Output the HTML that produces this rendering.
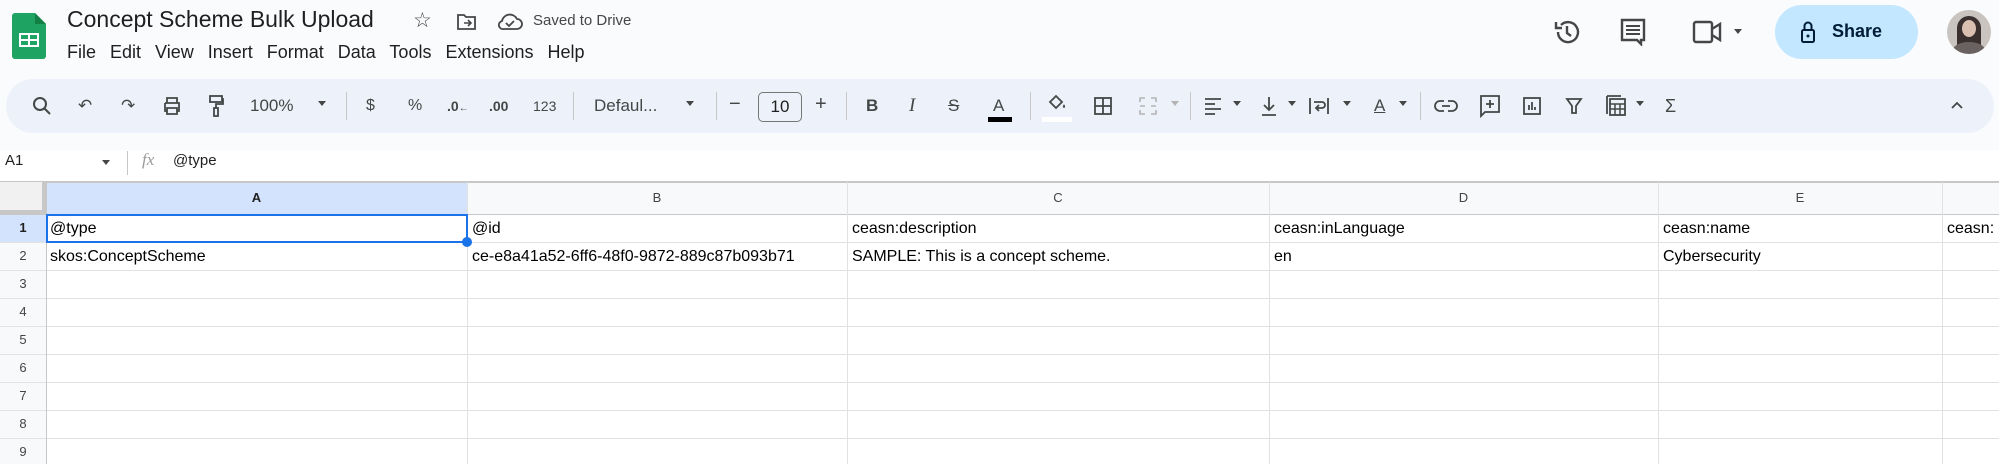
<!DOCTYPE html>
<html><head><meta charset="utf-8"><style>
*{margin:0;padding:0;box-sizing:border-box}
body{width:1999px;height:464px;overflow:hidden;background:#fff;font-family:"Liberation Sans",Arial,sans-serif;color:#1f1f1f;position:relative}
.a{position:absolute}
.top{left:0;top:0;width:1999px;height:150px;background:#f9fbfd}
.pill{left:6px;top:79px;width:1988px;height:54px;background:#edf2fa;border-radius:27px}
.ti{position:absolute;top:96px;font-size:17px;color:#444746;line-height:20px}
.sep{position:absolute;top:92px;width:1px;height:28px;background:#c7c7c7}
.car{position:absolute;top:101px;width:0;height:0;border-left:4px solid transparent;border-right:4px solid transparent;border-top:5px solid #444746}
.hl{position:absolute;left:0;width:1999px;height:1px;background:#e2e2e2}
.vl{position:absolute;top:182px;width:1px;height:282px;background:#e2e2e2}
.ch{position:absolute;top:182px;height:32px;font-size:13px;color:#444;text-align:center;line-height:32px}
.rn{position:absolute;left:0;width:46px;font-size:13px;color:#444;text-align:center;line-height:28px}
.c{position:absolute;font-size:16px;color:#000;line-height:28px;white-space:nowrap}
svg{position:absolute}
</style></head><body>
<div class="a top"></div>
<svg style="left:12px;top:13px" width="34" height="46" viewBox="0 0 34 46"><path d="M3 0H23L34 11V43a3 3 0 0 1-3 3H3a3 3 0 0 1-3-3V3a3 3 0 0 1 3-3z" fill="#1ea362"/><path d="M23 0V11H34z" fill="#138046"/><rect x="7" y="20" width="20" height="14" fill="#fff"/><rect x="9" y="22" width="7" height="4" fill="#1ea362"/><rect x="18" y="22" width="7" height="4" fill="#1ea362"/><rect x="9" y="28" width="7" height="4" fill="#1ea362"/><rect x="18" y="28" width="7" height="4" fill="#1ea362"/></svg>
<div class="a" style="left:67px;top:6px;font-size:23px;color:#1f1f1f">Concept Scheme Bulk Upload</div>
<div class="a" style="left:413px;top:8px;font-size:21px;color:#444746">☆</div>
<svg style="left:457px;top:13px" width="20" height="18" viewBox="0 0 20 18"><path d="M1 2h6l2 2h9v12H1z" fill="none" stroke="#444746" stroke-width="1.8"/><path d="M7 10h7M11 7l3 3-3 3" fill="none" stroke="#444746" stroke-width="1.6"/></svg>
<svg style="left:497px;top:11px" width="26" height="20" viewBox="0 0 26 20"><path d="M7 18h13a5 5 0 0 0 0-10 8 8 0 0 0-15 2 4 4 0 0 0 2 8z" fill="none" stroke="#444746" stroke-width="1.8"/><path d="M9 12l3 3 5-5" fill="none" stroke="#444746" stroke-width="1.8"/></svg>
<div class="a" style="left:533px;top:12px;font-size:15px;color:#444746">Saved to Drive</div>
<div class="a" style="left:67px;top:42px;font-size:18px;word-spacing:9px;color:#1f1f1f">File Edit View Insert Format Data Tools Extensions Help</div>
<svg style="left:1553px;top:18px" width="28" height="28" viewBox="0 0 28 28"><path d="M5 14a10 10 0 1 0 3-7" fill="none" stroke="#444746" stroke-width="2.4"/><path d="M3 4v6h6" fill="none" stroke="#444746" stroke-width="2.4"/><path d="M14 8v7l4 3" fill="none" stroke="#444746" stroke-width="2.4"/></svg>
<svg style="left:1620px;top:18px" width="26" height="28" viewBox="0 0 26 28"><path d="M2 2h22v20h-3v4l-4-4H2z" fill="none" stroke="#444746" stroke-width="2.4"/><path d="M6 8h14M6 12h14M6 16h14" stroke="#444746" stroke-width="2"/></svg>
<svg style="left:1692px;top:19px" width="32" height="26" viewBox="0 0 32 26"><rect x="2" y="3" width="18" height="20" rx="2" fill="none" stroke="#444746" stroke-width="2.4"/><path d="M20 10l8-5v16l-8-5" fill="none" stroke="#444746" stroke-width="2.4"/></svg>
<div class="car" style="left:1734px;top:29px"></div>
<div class="a" style="left:1775px;top:5px;width:143px;height:54px;border-radius:27px;background:#c2e7ff"></div>
<svg style="left:1800px;top:20px" width="16" height="24" viewBox="0 0 16 24"><rect x="2" y="10" width="12" height="12" rx="1.5" fill="none" stroke="#001d35" stroke-width="2"/><path d="M4.5 10V6a3.5 3.5 0 0 1 7 0v4" fill="none" stroke="#001d35" stroke-width="2"/><circle cx="8" cy="16" r="1.5" fill="#001d35"/></svg>
<div class="a" style="left:1832px;top:21px;font-size:18px;color:#001d35;font-weight:bold">Share</div>
<div class="a" style="left:1947px;top:10px;width:44px;height:44px;border-radius:50%;background:#c9c4c0;overflow:hidden"><div class="a" style="left:10px;top:6px;width:24px;height:36px;border-radius:12px 12px 4px 4px;background:#3a3030"></div><div class="a" style="left:15px;top:10px;width:14px;height:17px;border-radius:50%;background:#d9c0b0"></div><div class="a" style="left:6px;top:32px;width:32px;height:16px;border-radius:50% 50% 0 0;background:#6a6260"></div></div>
<div class="a pill"></div>
<svg style="left:32px;top:96px" width="20" height="20" viewBox="0 0 20 20"><circle cx="8" cy="8" r="6" fill="none" stroke="#444746" stroke-width="2"/><path d="M12.5 12.5L18 18" stroke="#444746" stroke-width="2"/></svg>
<div class="ti" style="left:78px">↶</div><div class="ti" style="left:121px">↷</div>
<svg style="left:162px;top:96px" width="20" height="20" viewBox="0 0 20 20"><path d="M5 7V2h10v5M3 7h14v8h-2M5 15H3V7M5 12h10v6H5z" fill="none" stroke="#444746" stroke-width="1.8"/></svg>
<svg style="left:208px;top:94px" width="16" height="24" viewBox="0 0 16 24"><rect x="2" y="2" width="12" height="6" fill="none" stroke="#444746" stroke-width="1.8"/><path d="M14 5h1v5H8v4" fill="none" stroke="#444746" stroke-width="1.8"/><rect x="6" y="14" width="4" height="8" fill="none" stroke="#444746" stroke-width="1.8"/></svg>
<div class="ti" style="left:250px">100%</div><div class="car" style="left:318px"></div>
<div class="sep" style="left:346px"></div>
<div class="ti" style="left:366px;font-size:16px">$</div><div class="ti" style="left:408px;font-size:16px">%</div>
<div class="ti" style="left:447px;font-size:14px;font-weight:bold">.0<span style="font-size:10px">←</span></div>
<div class="ti" style="left:489px;font-size:14px;font-weight:bold">.00</div>
<div class="ti" style="left:533px;font-size:14px">123</div>
<div class="sep" style="left:573px"></div>
<div class="ti" style="left:594px">Defaul...</div><div class="car" style="left:686px"></div>
<div class="sep" style="left:716px"></div>
<div class="ti" style="left:729px;font-size:20px;top:94px">−</div>
<div class="a" style="left:758px;top:92px;width:44px;height:30px;border:1px solid #747775;border-radius:5px;font-size:17px;text-align:center;line-height:28px;color:#1f1f1f">10</div>
<div class="ti" style="left:815px;font-size:20px;top:94px">+</div>
<div class="sep" style="left:846px"></div>
<div class="ti" style="left:866px;font-weight:bold">B</div>
<div class="ti" style="left:909px;font-style:italic;font-family:'Liberation Serif',serif;font-size:19px">I</div>
<div class="ti" style="left:948px;text-decoration:line-through">S</div>
<div class="ti" style="left:993px">A</div><div class="a" style="left:988px;top:117px;width:24px;height:5px;background:#000"></div>
<div class="sep" style="left:1030px"></div>
<svg style="left:1046px;top:92px" width="22" height="24" viewBox="0 0 22 24"><path d="M4 10l6-6 6 6-6 6z" fill="none" stroke="#444746" stroke-width="1.8"/><path d="M18 12c-1 2-2 3 0 4 2-1 1-2 0-4z" fill="#444746"/></svg>
<div class="a" style="left:1042px;top:117px;width:30px;height:5px;background:#fff"></div>
<svg style="left:1093px;top:96px" width="20" height="20" viewBox="0 0 20 20"><rect x="2" y="2" width="16" height="16" fill="none" stroke="#444746" stroke-width="1.8"/><path d="M10 2v16M2 10h16" stroke="#444746" stroke-width="1.8"/></svg>
<svg style="left:1138px;top:96px" width="20" height="20" viewBox="0 0 20 20"><path d="M2 6V2h5M13 2h5v4M2 14v4h5M13 18h5v-4M2 10h5M13 10h5" fill="none" stroke="#b4b4b4" stroke-width="1.6"/></svg>
<div class="car" style="left:1171px;border-top-color:#b4b4b4"></div>
<div class="sep" style="left:1190px"></div>
<svg style="left:1203px;top:96px" width="20" height="20" viewBox="0 0 20 20"><path d="M2 3h16M2 8h10M2 13h16M2 18h10" stroke="#444746" stroke-width="1.8"/></svg><div class="car" style="left:1233px"></div>
<svg style="left:1260px;top:95px" width="18" height="22" viewBox="0 0 18 22"><path d="M9 2v13M4 10l5 5 5-5M2 20h14" fill="none" stroke="#444746" stroke-width="1.8"/></svg><div class="car" style="left:1288px"></div>
<svg style="left:1308px;top:96px" width="22" height="20" viewBox="0 0 22 20"><path d="M2 2v16M20 2v16M6 6h8a3 3 0 0 1 0 6H9M11 9l-3 3 3 3" fill="none" stroke="#444746" stroke-width="1.8"/></svg><div class="car" style="left:1343px"></div>
<div class="ti" style="left:1374px;text-decoration:underline">A</div><div class="car" style="left:1399px"></div>
<div class="sep" style="left:1420px"></div>
<svg style="left:1434px;top:99px" width="24" height="14" viewBox="0 0 24 14"><path d="M10 2H6a5 5 0 0 0 0 10h4M14 2h4a5 5 0 0 1 0 10h-4M8 7h8" fill="none" stroke="#444746" stroke-width="1.8"/></svg>
<svg style="left:1479px;top:94px" width="22" height="24" viewBox="0 0 22 24"><path d="M2 2h18v16H6l-4 4z" fill="none" stroke="#444746" stroke-width="1.8"/><path d="M11 6v8M7 10h8" stroke="#444746" stroke-width="1.8"/></svg>
<svg style="left:1522px;top:96px" width="20" height="20" viewBox="0 0 20 20"><rect x="2" y="2" width="16" height="16" fill="none" stroke="#444746" stroke-width="1.8"/><path d="M7 14V9M10 14V6M13 14v-3" stroke="#444746" stroke-width="1.8"/></svg>
<svg style="left:1565px;top:97px" width="18" height="18" viewBox="0 0 18 18"><path d="M2 2h14l-5 7v7H7V9z" fill="none" stroke="#444746" stroke-width="1.8"/></svg>
<svg style="left:1605px;top:94px" width="22" height="24" viewBox="0 0 22 24"><path d="M2 2h14M2 2v18" stroke="#444746" stroke-width="1.8"/><rect x="5" y="5" width="15" height="16" fill="none" stroke="#444746" stroke-width="1.8"/><path d="M5 10h15M5 15h15M10 10v11M15 10v11" stroke="#444746" stroke-width="1.5"/></svg><div class="car" style="left:1636px"></div>
<div class="ti" style="left:1665px;font-size:18px">Σ</div>
<svg style="left:1950px;top:100px" width="14" height="10" viewBox="0 0 14 10"><path d="M2 8l5-5 5 5" fill="none" stroke="#444746" stroke-width="1.8"/></svg>
<div class="a" style="left:0;top:150px;width:1999px;height:32px;background:#fff"></div>
<div class="a" style="left:5px;top:152px;font-size:15px;color:#1f1f1f">A1</div>
<div class="car" style="left:102px;top:160px"></div>
<div class="a" style="left:127px;top:151px;width:1px;height:24px;background:#c7c7c7"></div>
<div class="a" style="left:142px;top:150px;font-size:17px;font-style:italic;font-family:'Liberation Serif',serif;color:#9a9a9a">fx</div>
<div class="a" style="left:173px;top:152px;font-size:15px;color:#1f1f1f">@type</div>
<div class="a" style="left:0;top:182px;width:1999px;height:32px;background:#f8f9fa"></div>
<div class="a" style="left:0;top:214px;width:46px;height:250px;background:#f8f9fa"></div>
<div class="a" style="left:46px;top:182px;width:421px;height:32px;background:#d3e3fd"></div>
<div class="a" style="left:0;top:214px;width:46px;height:28px;background:#d3e3fd"></div>
<div class="a" style="left:0;top:181px;width:1999px;height:2px;background:#c7c7c7"></div>
<div class="a" style="left:0;top:182px;width:46px;height:32px;background:#f1f1f1;border-right:4px solid #c7c7c7;border-bottom:4px solid #c7c7c7"></div>
<div class="hl" style="top:214px;background:#c7c7c7"></div>
<div class="hl" style="top:242px"></div><div class="hl" style="top:270px"></div><div class="hl" style="top:298px"></div><div class="hl" style="top:326px"></div><div class="hl" style="top:354px"></div><div class="hl" style="top:382px"></div><div class="hl" style="top:410px"></div><div class="hl" style="top:438px"></div>
<div class="vl" style="left:46px;background:#c7c7c7"></div><div class="vl" style="left:467px"></div><div class="vl" style="left:847px"></div><div class="vl" style="left:1269px"></div><div class="vl" style="left:1658px"></div><div class="vl" style="left:1942px"></div>
<div class="ch" style="left:46px;width:421px;font-weight:bold;color:#1f1f1f">A</div>
<div class="ch" style="left:467px;width:380px">B</div>
<div class="ch" style="left:847px;width:422px">C</div>
<div class="ch" style="left:1269px;width:389px">D</div>
<div class="ch" style="left:1658px;width:284px">E</div>
<div class="rn" style="top:214px;font-weight:bold;color:#1f1f1f">1</div>
<div class="rn" style="top:242px">2</div><div class="rn" style="top:270px">3</div><div class="rn" style="top:298px">4</div><div class="rn" style="top:326px">5</div><div class="rn" style="top:354px">6</div><div class="rn" style="top:382px">7</div><div class="rn" style="top:410px">8</div><div class="rn" style="top:438px">9</div>
<div class="c" style="left:50px;top:215px">@type</div>
<div class="c" style="left:472px;top:215px">@id</div>
<div class="c" style="left:852px;top:215px">ceasn:description</div>
<div class="c" style="left:1274px;top:215px">ceasn:inLanguage</div>
<div class="c" style="left:1663px;top:215px">ceasn:name</div>
<div class="c" style="left:1947px;top:215px">ceasn:</div>
<div class="c" style="left:50px;top:243px">skos:ConceptScheme</div>
<div class="c" style="left:472px;top:243px">ce-e8a41a52-6ff6-48f0-9872-889c87b093b71</div>
<div class="c" style="left:852px;top:243px">SAMPLE: This is a concept scheme.</div>
<div class="c" style="left:1274px;top:243px">en</div>
<div class="c" style="left:1663px;top:243px">Cybersecurity</div>
<div class="a" style="left:46px;top:214px;width:422px;height:29px;border:2px solid #1a73e8"></div>
<div class="a" style="left:462px;top:237px;width:10px;height:10px;border-radius:50%;background:#1a73e8"></div>
</body></html>
